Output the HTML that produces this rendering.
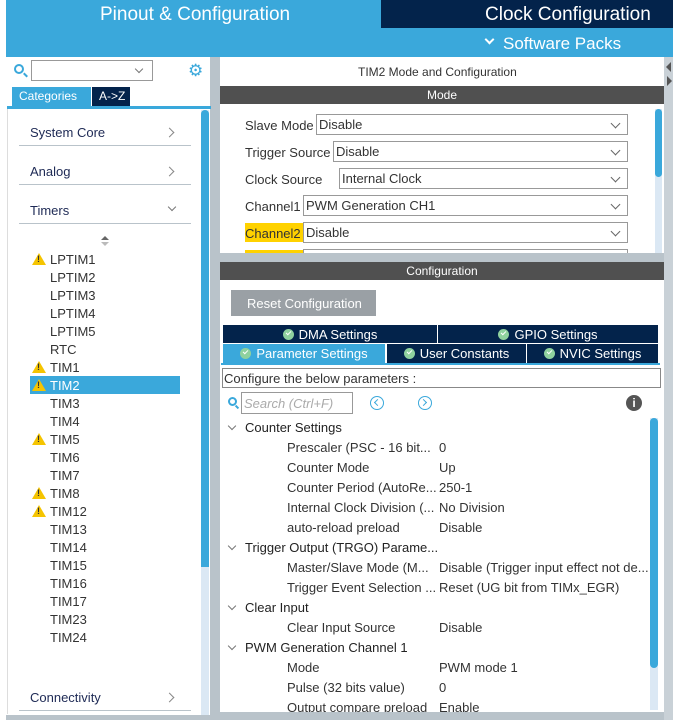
<!DOCTYPE html>
<html><head><style>
*{margin:0;padding:0;box-sizing:border-box}
body{width:673px;height:720px;overflow:hidden;background:#b9c3ca;font-family:"Liberation Sans",sans-serif;position:relative;font-size:13px;color:#333}
.a{position:absolute;white-space:nowrap}
.chk{display:inline-block;width:11px;height:11px;border-radius:50%;background:#8fd19e;position:relative;vertical-align:-1px;margin-right:5px}
.chk:after{content:"";position:absolute;left:3px;top:2px;width:4px;height:2px;border-left:1.5px solid #fff;border-bottom:1.5px solid #fff;transform:rotate(-45deg)}
.warn{position:absolute;width:0;height:0;border-left:7px solid transparent;border-right:7px solid transparent;border-bottom:12px solid #f5c400}
.warn:after{content:"!";position:absolute;left:-2px;top:1px;font-size:9px;font-weight:bold;color:#333;line-height:11px}
.sel{position:absolute;border:1px solid #999;background:#fff;height:21px;font-size:13px;padding:2px 2px;color:#333}
.sel:after{content:"";position:absolute;right:8px;top:5px;width:6px;height:6px;border-right:1px solid #666;border-bottom:1px solid #666;transform:rotate(45deg)}
.tr{position:absolute;font-size:13px;color:#222}
.tv{position:absolute;font-size:13px;color:#333}
.car{position:absolute;width:6px;height:6px;border-right:1px solid #777;border-bottom:1px solid #777;transform:rotate(45deg)}
.nav{position:absolute;width:14px;height:14px;border:1.5px solid #3aa8db;border-radius:50%}
.nav:after{content:"";position:absolute;top:3px;width:4px;height:4px;border-left:1.5px solid #3aa8db;border-bottom:1.5px solid #3aa8db}
.nl:after{left:4px;transform:rotate(45deg)}
.nr:after{left:2px;transform:rotate(-135deg)}
</style></head><body>
<div class="a" style="left:0;top:0;width:673px;height:57px;background:#3aa8db"></div>
<div class="a" style="left:0;top:0;width:6px;height:720px;background:#fff"></div>
<div class="a" style="left:381px;top:0;width:292px;height:28px;background:#03234b"></div>
<div class="a" style="left:100px;top:4px;font-size:19px;color:#fff">Pinout &amp; Configuration</div>
<div class="a" style="left:485px;top:4px;font-size:19px;color:#fff">Clock Configuration</div>
<div class="a" style="left:486px;top:36px;width:7px;height:7px;border-right:2px solid #fff;border-bottom:2px solid #fff;transform:rotate(45deg)"></div>
<div class="a" style="left:503px;top:34px;font-size:17px;color:#fff">Software Packs</div>

<!-- left panel -->
<div class="a" style="left:6px;top:57px;width:204px;height:663px;background:#fff"></div>
<div class="a" style="left:14px;top:64px;width:10px;height:10px;border:2px solid #3aa8db;border-radius:50%"></div>
<div class="a" style="left:23px;top:74px;width:5px;height:2px;background:#3aa8db;transform:rotate(45deg)"></div>
<div class="a" style="left:31px;top:60px;width:122px;height:21px;border:1px solid #999"></div>
<div class="car" style="left:136px;top:66px"></div>
<div class="a" style="left:188px;top:61px;font-size:17px;color:#3aa8db">⚙</div>
<div class="a" style="left:12px;top:87px;width:79px;height:19px;background:#3aa8db;color:#fff;font-size:12px;padding:2px 0 0 7px">Categories</div>
<div class="a" style="left:92px;top:87px;width:38px;height:19px;background:#03234b;color:#fff;font-size:12px;padding:2px 0 0 7px">A-&gt;Z</div>
<div class="a" style="left:7px;top:106px;width:204px;height:3px;background:#3aa8db"></div>
<div class="a" style="left:7px;top:109px;width:1px;height:605px;background:#ddd"></div>
<div class="a" style="left:201px;top:110px;width:8px;height:605px;background:#dbe8f4"></div>
<div class="a" style="left:201px;top:110px;width:8px;height:457px;background:#3aa8db;border-radius:4px 4px 0 0"></div>
<div class="a" style="left:30px;top:125px;font-size:13px;color:#1e2a55">System Core</div>
<div class="a" style="left:166px;top:129px;width:7px;height:7px;border-right:1px solid #888;border-top:1px solid #888;transform:rotate(45deg)"></div>
<div class="a" style="left:19px;top:145px;width:172px;height:1px;background:#b9c3ca"></div>
<div class="a" style="left:30px;top:164px;font-size:13px;color:#1e2a55">Analog</div>
<div class="a" style="left:166px;top:168px;width:7px;height:7px;border-right:1px solid #888;border-top:1px solid #888;transform:rotate(45deg)"></div>
<div class="a" style="left:19px;top:184px;width:172px;height:1px;background:#b9c3ca"></div>
<div class="a" style="left:30px;top:203px;font-size:13px;color:#1e2a55">Timers</div>
<div class="car" style="left:169px;top:204px"></div>
<div class="a" style="left:19px;top:223px;width:172px;height:1px;background:#b9c3ca"></div>
<div class="a" style="left:101px;top:236px;border-left:4px solid transparent;border-right:4px solid transparent;border-bottom:4px solid #666"></div>
<div class="a" style="left:101px;top:242px;border-left:4px solid transparent;border-right:4px solid transparent;border-top:4px solid #bbb"></div>
<div class="a" style="left:30px;top:376px;width:150px;height:18px;background:#3aa8db"></div>
<div class="warn" style="left:32px;top:253px"></div>
<div class="warn" style="left:32px;top:361px"></div>
<div class="warn" style="left:32px;top:379px"></div>
<div class="warn" style="left:32px;top:433px"></div>
<div class="warn" style="left:32px;top:487px"></div>
<div class="warn" style="left:32px;top:505px"></div>
<div class="a" style="left:50px;top:251px;font-size:13px;line-height:18px;color:#333">LPTIM1<br>LPTIM2<br>LPTIM3<br>LPTIM4<br>LPTIM5<br>RTC<br>TIM1<br><span style="color:#fff">TIM2</span><br>TIM3<br>TIM4<br>TIM5<br>TIM6<br>TIM7<br>TIM8<br>TIM12<br>TIM13<br>TIM14<br>TIM15<br>TIM16<br>TIM17<br>TIM23<br>TIM24</div>
<div class="a" style="left:30px;top:690px;font-size:13px;color:#1e2a55">Connectivity</div>
<div class="a" style="left:166px;top:694px;width:7px;height:7px;border-right:1px solid #888;border-top:1px solid #888;transform:rotate(45deg)"></div>
<div class="a" style="left:19px;top:710px;width:172px;height:1px;background:#b9c3ca"></div>
<div class="a" style="left:6px;top:715px;width:204px;height:5px;background:#b9c3ca"></div>

<!-- right: mode -->
<div class="a" style="left:220px;top:57px;width:444px;height:196px;background:#fff"></div>
<div class="a" style="left:664px;top:57px;width:9px;height:663px;background:#c9d1d7"></div>
<div class="a" style="left:666px;top:62px;border-top:5px solid transparent;border-bottom:5px solid transparent;border-right:5px solid #555"></div>
<div class="a" style="left:667px;top:76px;border-top:5px solid transparent;border-bottom:5px solid transparent;border-left:5px solid #555"></div>
<div class="a" style="left:358px;top:65px;font-size:12px;color:#333">TIM2 Mode and Configuration</div>
<div class="a" style="left:220px;top:86px;width:444px;height:18px;background:#505050;color:#fff;font-size:12px;text-align:center;padding-top:2px">Mode</div>
<div class="a" style="left:655px;top:109px;width:7px;height:144px;background:#dbe8f4"></div>
<div class="a" style="left:655px;top:109px;width:7px;height:68px;background:#3aa8db;border-radius:4px"></div>
<div class="a" style="left:245px;top:118px">Slave Mode</div><div class="sel" style="left:316px;top:114px;width:312px">Disable</div>
<div class="a" style="left:245px;top:145px">Trigger Source</div><div class="sel" style="left:333px;top:141px;width:295px">Disable</div>
<div class="a" style="left:245px;top:172px">Clock Source</div><div class="sel" style="left:339px;top:168px;width:289px">Internal Clock</div>
<div class="a" style="left:245px;top:199px">Channel1</div><div class="sel" style="left:303px;top:195px;width:325px">PWM Generation CH1</div>
<div class="a" style="left:245px;top:223px;width:58px;height:19px;background:#ffd200"></div>
<div class="a" style="left:245px;top:226px">Channel2</div><div class="sel" style="left:303px;top:222px;width:325px">Disable</div>
<div class="a" style="left:245px;top:250px;width:58px;height:3px;background:#ffd200"></div>
<div class="a" style="left:303px;top:249px;width:325px;height:4px;border:1px solid #999;border-bottom:none"></div>

<!-- configuration -->
<div class="a" style="left:220px;top:262px;width:444px;height:450px;background:#fff"></div>
<div class="a" style="left:220px;top:262px;width:444px;height:18px;background:#505050;color:#fff;font-size:12px;text-align:center;padding-top:2px">Configuration</div>
<div class="a" style="left:231px;top:290px;width:145px;height:26px;background:#9aa0a5;color:#fff;font-size:13px;padding:6px 0 0 16px">Reset Configuration</div>
<div class="a" style="left:223px;top:325px;width:214px;height:18px;background:#03234b;color:#fff;font-size:13px;text-align:center;padding-top:2px"><span class="chk"></span>DMA Settings</div>
<div class="a" style="left:438px;top:325px;width:220px;height:18px;background:#03234b;color:#fff;font-size:13px;text-align:center;padding-top:2px"><span class="chk"></span>GPIO Settings</div>
<div class="a" style="left:223px;top:344px;width:162px;height:20px;background:#3aa8db;color:#fff;font-size:13px;text-align:center;padding-top:2px"><span class="chk"></span>Parameter Settings</div>
<div class="a" style="left:387px;top:344px;width:139px;height:19px;background:#03234b;color:#fff;font-size:13px;text-align:center;padding-top:2px"><span class="chk"></span>User Constants</div>
<div class="a" style="left:527px;top:344px;width:131px;height:19px;background:#03234b;color:#fff;font-size:13px;text-align:center;padding-top:2px"><span class="chk"></span>NVIC Settings</div>
<div class="a" style="left:221px;top:363px;width:439px;height:2px;background:#3aa8db"></div>
<div class="a" style="left:222px;top:368px;width:439px;height:20px;border:1px solid #888;font-size:13px;padding:2px 0 0 1px;color:#333">Configure the below parameters :</div>
<div class="a" style="left:228px;top:397px;width:9px;height:9px;border:2px solid #3aa8db;border-radius:50%"></div>
<div class="a" style="left:235px;top:406px;width:4px;height:2px;background:#3aa8db;transform:rotate(45deg)"></div>
<div class="a" style="left:241px;top:392px;width:112px;height:22px;border:1px solid #999;font-style:italic;color:#aaa;padding:3px 2px;font-size:13px">Search (Ctrl+F)</div>
<div class="nav nl" style="left:370px;top:396px"></div>
<div class="nav nr" style="left:418px;top:396px"></div>
<div class="a" style="left:626px;top:395px;width:16px;height:16px;border-radius:50%;background:#555;color:#fff;font-size:12px;font-weight:bold;text-align:center;line-height:16px">i</div>
<div class="a" style="left:650px;top:418px;width:8px;height:292px;background:#dbe8f4"></div>
<div class="a" style="left:650px;top:418px;width:8px;height:250px;background:#3aa8db;border-radius:4px"></div>

<div class="car" style="left:229px;top:423px"></div><div class="tr" style="left:245px;top:420px">Counter Settings</div>
<div class="tv" style="left:287px;top:440px">Prescaler (PSC - 16 bit...</div><div class="tv" style="left:439px;top:440px">0</div>
<div class="tv" style="left:287px;top:460px">Counter Mode</div><div class="tv" style="left:439px;top:460px">Up</div>
<div class="tv" style="left:287px;top:480px">Counter Period (AutoRe...</div><div class="tv" style="left:439px;top:480px">250-1</div>
<div class="tv" style="left:287px;top:500px">Internal Clock Division (...</div><div class="tv" style="left:439px;top:500px">No Division</div>
<div class="tv" style="left:287px;top:520px">auto-reload preload</div><div class="tv" style="left:439px;top:520px">Disable</div>
<div class="car" style="left:229px;top:543px"></div><div class="tr" style="left:245px;top:540px">Trigger Output (TRGO) Parame...</div>
<div class="tv" style="left:287px;top:560px">Master/Slave Mode (M...</div><div class="tv" style="left:439px;top:560px">Disable (Trigger input effect not de...</div>
<div class="tv" style="left:287px;top:580px">Trigger Event Selection ...</div><div class="tv" style="left:439px;top:580px">Reset (UG bit from TIMx_EGR)</div>
<div class="car" style="left:229px;top:603px"></div><div class="tr" style="left:245px;top:600px">Clear Input</div>
<div class="tv" style="left:287px;top:620px">Clear Input Source</div><div class="tv" style="left:439px;top:620px">Disable</div>
<div class="car" style="left:229px;top:643px"></div><div class="tr" style="left:245px;top:640px">PWM Generation Channel 1</div>
<div class="tv" style="left:287px;top:660px">Mode</div><div class="tv" style="left:439px;top:660px">PWM mode 1</div>
<div class="tv" style="left:287px;top:680px">Pulse (32 bits value)</div><div class="tv" style="left:439px;top:680px">0</div>
<div class="a" style="left:220px;top:700px;width:430px;height:12px;overflow:hidden"><div class="tv" style="left:67px;top:0">Output compare preload</div><div class="tv" style="left:219px;top:0">Enable</div></div>
</body></html>
